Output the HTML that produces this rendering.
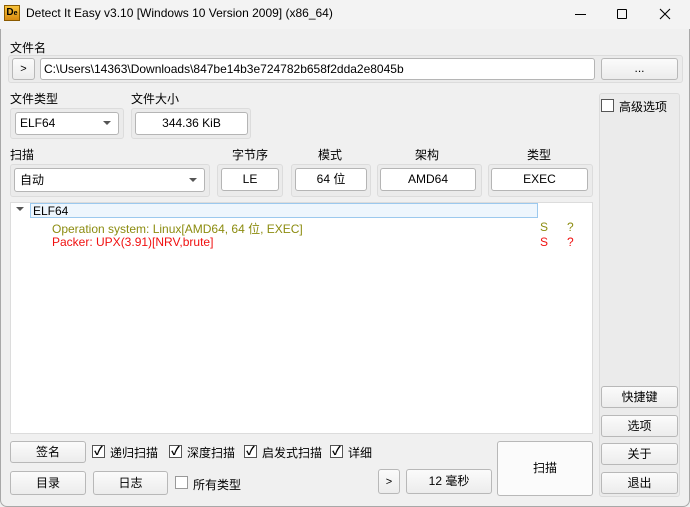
<!DOCTYPE html>
<html><head><meta charset="utf-8"><style>
*{box-sizing:border-box;margin:0;padding:0}
body{width:690px;height:507px;overflow:hidden;background:#f0f0f0;font-family:"Liberation Sans","Noto Sans CJK SC",sans-serif;font-size:12px;color:#000;position:relative}
.a{position:absolute}
.win{left:0;top:0;width:690px;height:507px;border:1px solid #a8a8a8;border-radius:7px;background:#f0f0f0;overflow:hidden}
.tb{left:0;top:0;width:690px;height:29px;background:#f3f3f3}
.grp{background:#ebebeb;border:1px solid #dcdcdc;border-radius:3px}
.fld{background:#fff;border:1px solid #b5b5b5;border-radius:3px;text-align:center;line-height:21px}
.btn{background:linear-gradient(#fbfbfb,#ececec);border:1px solid #b8b8b8;border-radius:3px;text-align:center}
.cb{width:13px;height:13px;border:1px solid #555;background:#fff;font-size:12px;line-height:11px;text-align:center;font-weight:bold}
.lbl{white-space:nowrap}
</style></head><body>
<div class="a win"></div>
<div class="a tb"></div>
<div class="a" style="left:4px;top:5px;width:16px;height:16px;background:linear-gradient(#f7c23a,#d98b10);border:1px solid #8a5a00;font-size:10px;font-weight:bold;line-height:14px;text-align:center;color:#000">D<span style="font-size:7px">e</span></div>
<div class="a lbl" style="left:26px;top:6px;font-size:12px">Detect It Easy v3.10 [Windows 10 Version 2009] (x86_64)</div>
<div class="a" style="left:575px;top:14px;width:11px;height:1px;background:#000"></div>
<div class="a" style="left:617px;top:9px;width:10px;height:10px;border:1px solid #000;border-radius:1px"></div>
<svg class="a" style="left:659px;top:8px" width="12" height="12"><path d="M1 1L11 11M11 1L1 11" stroke="#000" stroke-width="1.1"/></svg>

<div class="a lbl" style="left:10px;top:39px">文件名</div>
<div class="a grp" style="left:8px;top:55px;width:675px;height:28px"></div>
<div class="a btn" style="left:12px;top:58px;width:23px;height:22px;line-height:20px;font-size:11px">&gt;</div>
<div class="a fld" style="left:40px;top:58px;width:555px;height:22px;text-align:left;padding-left:3px;line-height:20px">C:\Users\14363\Downloads\847be14b3e724782b658f2dda2e8045b</div>
<div class="a btn" style="left:601px;top:58px;width:77px;height:22px;line-height:18px">...</div>

<div class="a lbl" style="left:10px;top:90px">文件类型</div>
<div class="a grp" style="left:10px;top:108px;width:114px;height:31px"></div>
<div class="a fld" style="left:15px;top:112px;width:104px;height:23px;text-align:left;padding-left:4px">ELF64</div>
<svg class="a" style="left:103px;top:121px" width="8" height="5"><path d="M0 0H8L4 4Z" fill="#555"/></svg>
<div class="a lbl" style="left:131px;top:90px">文件大小</div>
<div class="a grp" style="left:131px;top:108px;width:120px;height:31px"></div>
<div class="a fld" style="left:135px;top:112px;width:113px;height:23px">344.36 KiB</div>

<div class="a grp" style="left:599px;top:93px;width:81px;height:404px"></div>
<div class="a cb" style="left:601px;top:99px"></div>
<div class="a lbl" style="left:619px;top:98px">高级选项</div>

<div class="a lbl" style="left:10px;top:146px">扫描</div>
<div class="a grp" style="left:10px;top:164px;width:200px;height:33px"></div>
<div class="a fld" style="left:14px;top:168px;width:191px;height:24px;text-align:left;padding-left:5px;line-height:22px">自动</div>
<svg class="a" style="left:189px;top:178px" width="8" height="5"><path d="M0 0H8L4 4Z" fill="#555"/></svg>

<div class="a lbl" style="left:232px;top:146px">字节序</div>
<div class="a grp" style="left:217px;top:164px;width:66px;height:33px"></div>
<div class="a fld" style="left:221px;top:168px;width:58px;height:23px">LE</div>
<div class="a lbl" style="left:318px;top:146px">模式</div>
<div class="a grp" style="left:291px;top:164px;width:80px;height:33px"></div>
<div class="a fld" style="left:295px;top:168px;width:72px;height:23px">64 位</div>
<div class="a lbl" style="left:415px;top:146px">架构</div>
<div class="a grp" style="left:377px;top:164px;width:105px;height:33px"></div>
<div class="a fld" style="left:380px;top:168px;width:96px;height:23px">AMD64</div>
<div class="a lbl" style="left:527px;top:146px">类型</div>
<div class="a grp" style="left:488px;top:164px;width:105px;height:33px"></div>
<div class="a fld" style="left:491px;top:168px;width:97px;height:23px">EXEC</div>

<div class="a" style="left:10px;top:202px;width:583px;height:232px;background:#fff;border:1px solid #dcdcdc"></div>
<svg class="a" style="left:16px;top:207px" width="8" height="5"><path d="M0 0H8L4 4Z" fill="#555"/></svg>
<div class="a" style="left:30px;top:203px;width:508px;height:15px;background:#eef6fd;border:1px solid #9cc9ee"></div>
<div class="a lbl" style="left:33px;top:204px">ELF64</div>
<div class="a lbl" style="left:52px;top:220px;color:#8c8c10">Operation system: Linux[AMD64, 64 位, EXEC]</div>
<div class="a lbl" style="left:540px;top:220px;color:#8c8c10">S</div>
<div class="a lbl" style="left:567px;top:220px;color:#8c8c10">?</div>
<div class="a lbl" style="left:52px;top:235px;color:#f01010">Packer: UPX(3.91)[NRV,brute]</div>
<div class="a lbl" style="left:540px;top:235px;color:#f01010">S</div>
<div class="a lbl" style="left:567px;top:235px;color:#f01010">?</div>

<div class="a btn" style="left:10px;top:441px;width:76px;height:22px;line-height:20px">签名</div>
<div class="a cb" style="left:92px;top:445px">✓</div><div class="a lbl" style="left:110px;top:444px">递归扫描</div>
<div class="a cb" style="left:169px;top:445px">✓</div><div class="a lbl" style="left:187px;top:444px">深度扫描</div>
<div class="a cb" style="left:244px;top:445px">✓</div><div class="a lbl" style="left:262px;top:444px">启发式扫描</div>
<div class="a cb" style="left:330px;top:445px">✓</div><div class="a lbl" style="left:348px;top:444px">详细</div>
<div class="a btn" style="left:10px;top:471px;width:76px;height:24px;line-height:22px">目录</div>
<div class="a btn" style="left:93px;top:471px;width:75px;height:24px;line-height:22px">日志</div>
<div class="a cb" style="left:175px;top:476px;border-color:#999"></div><div class="a lbl" style="left:193px;top:476px">所有类型</div>
<div class="a btn" style="left:378px;top:469px;width:22px;height:25px;line-height:25px;font-size:11px">&gt;</div>
<div class="a btn" style="left:406px;top:469px;width:86px;height:25px;line-height:23px">12 毫秒</div>
<div class="a btn" style="left:497px;top:441px;width:96px;height:55px;line-height:53px;background:#fbfbfb">扫描</div>
<div class="a btn" style="left:601px;top:386px;width:77px;height:22px;line-height:20px">快捷键</div>
<div class="a btn" style="left:601px;top:415px;width:77px;height:22px;line-height:20px">选项</div>
<div class="a btn" style="left:601px;top:443px;width:77px;height:22px;line-height:20px">关于</div>
<div class="a btn" style="left:601px;top:472px;width:77px;height:22px;line-height:20px">退出</div>
</body></html>
